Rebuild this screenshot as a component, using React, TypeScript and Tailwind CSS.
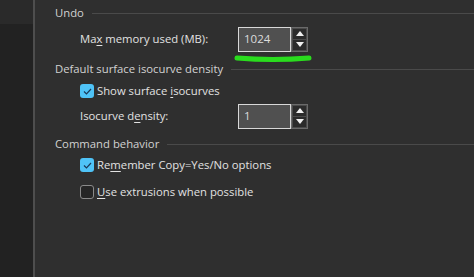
import React from "react";

function Spin({ value }: { value: string }) {
  return (
    <div className="flex h-[25px] w-[70px]">
      <div className="flex flex-1 items-center border border-[#d8d8d8] bg-[#505050] pl-[5px] text-[11.5px] text-[#dcdcdc]">
        {value}
      </div>
      <div className="flex w-[17px] flex-col gap-px border border-[#6a6a6a] bg-[#4a4a4a] p-px">
        <div className="flex flex-1 items-center justify-center bg-[#2b2b2b]">
          <svg width="8" height="5" viewBox="0 0 8 5">
            <path d="M0 5 L4 0 L8 5 Z" fill="#f0f0f0" />
          </svg>
        </div>
        <div className="flex flex-1 items-center justify-center bg-[#2b2b2b]">
          <svg width="8" height="5" viewBox="0 0 8 5">
            <path d="M0 0 L4 5 L8 0 Z" fill="#f0f0f0" />
          </svg>
        </div>
      </div>
    </div>
  );
}

function Check({ on }: { on: boolean }) {
  return on ? (
    <div className="flex h-[14px] w-[14px] items-center justify-center rounded-[3px] bg-[#4fc3f7]">
      <svg width="9" height="7" viewBox="0 0 9 7">
        <path d="M1 3.5 L3.5 6 L8 1" stroke="#1a3a5a" strokeWidth="1.2" fill="none" />
      </svg>
    </div>
  ) : (
    <div className="h-[14px] w-[14px] rounded-[3px] border border-[#8a8a8a] bg-[#262626]" />
  );
}

function Section({ title }: { title: string }) {
  return (
    <div className="flex h-[20px] items-center gap-[8px] text-[#d2d2d2]">
      <span>{title}</span>
      <div className="h-px flex-1 bg-[#4a4a4a]" />
    </div>
  );
}

export default function App() {
  return (
    <div
      className="flex h-[277px] w-[474px] overflow-hidden bg-[#2f2f2f] text-[11.3px] text-[#e2e2e2]"
      style={{ fontFamily: '"Open Sans", "Noto Sans", sans-serif' }}
    >
      <div className="flex w-[33px] flex-col bg-[#222222]">
        <div className="h-[24px] bg-[#2a2a2a]" />
      </div>
      <div className="w-[2px] bg-[#4e4e4e]" />
      <div className="flex flex-1 flex-col pl-[20px] pt-[3px]">
        <Section title="Undo" />
        <div className="mt-[3px] flex h-[26px] items-center pl-[25px]">
          <span className="w-[158px]">
            Ma<u className="underline-offset-2">x</u> memory used (MB):
          </span>
          <div className="relative">
            <Spin value="1024" />
            <svg className="absolute left-[-5px] top-[27px]" width="80" height="10" viewBox="0 0 80 10">
              <path d="M4 4 Q40 7 76 4" stroke="#2adc1e" strokeWidth="5" strokeLinecap="round" fill="none" />
            </svg>
          </div>
        </div>
        <div className="mt-[7px]">
          <Section title="Default surface isocurve density" />
        </div>
        <div className="mt-[4px] flex h-[16px] items-center gap-[3px] pl-[25px]">
          <Check on />
          <span>
            Show surface <u className="underline-offset-2">i</u>socurves
          </span>
        </div>
        <div className="mt-[4px] flex h-[26px] items-center pl-[25px]">
          <span className="w-[158px]">
            Isocurve d<u className="underline-offset-2">e</u>nsity:
          </span>
          <Spin value="1" />
        </div>
        <div className="mt-[5px]">
          <Section title="Command behavior" />
        </div>
        <div className="mt-[3px] flex h-[16px] items-center gap-[3px] pl-[25px]">
          <Check on />
          <span>
            Re<u className="underline-offset-2">m</u>ember Copy=Yes/No options
          </span>
        </div>
        <div className="mt-[11px] flex h-[16px] items-center gap-[3px] pl-[25px]">
          <Check on={false} />
          <span>
            <u className="underline-offset-2">U</u>se extrusions when possible
          </span>
        </div>
      </div>
    </div>
  );
}
